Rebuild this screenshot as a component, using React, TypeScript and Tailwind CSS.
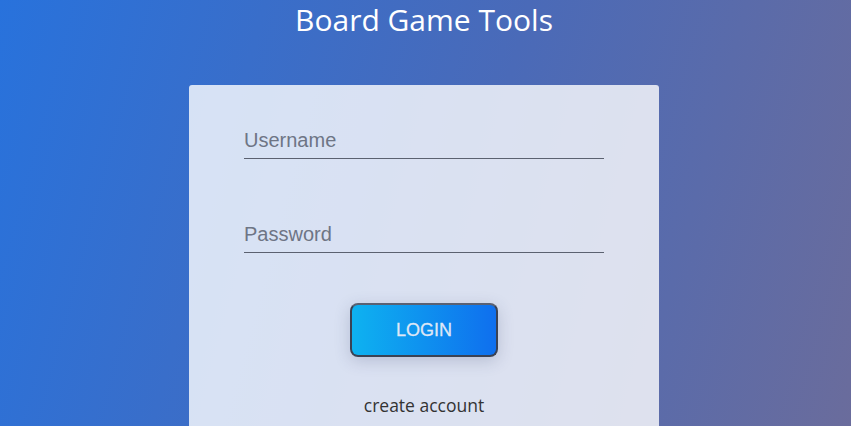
import React from "react";

export default function App() {
  return (
    <div className="w-[851px] h-[426px] overflow-hidden pr-[3px] bg-[linear-gradient(105deg,#2872dc_0%,#4a6ab8_55%,#6a6c9c_100%)] flex flex-col items-center">
      <h1 className="mt-[0px] text-[30px] leading-[40px] text-white font-['Open_Sans',sans-serif]">Board Game Tools</h1>
      <div className="mt-[45px] w-[470px] h-[400px] shrink-0 rounded-[3px] bg-[rgba(255,255,255,0.8)] flex flex-col items-center">
        <div className="mt-[42px] w-[360px] flex flex-col">
          <input
            placeholder="Username"
            className="h-[32px] pb-[4px] border-b border-[#5b6170] bg-transparent text-[20px] font-['Liberation_Sans',Arial,sans-serif] text-[#444] placeholder:text-[#6e7585] outline-none"
          />
          <input
            type="password"
            placeholder="Password"
            className="mt-[62px] h-[32px] pb-[4px] border-b border-[#5b6170] bg-transparent text-[20px] font-['Liberation_Sans',Arial,sans-serif] text-[#444] placeholder:text-[#6e7585] outline-none"
          />
        </div>
        <button className="mt-[50px] w-[148px] h-[54px] rounded-[8px] border-2 border-[#3a4254] border-t-[#5a6172] bg-[linear-gradient(90deg,#0eb2f0,#0f6fee)] text-[#dfe7f6] text-[18px] font-['Liberation_Sans',Arial,sans-serif] [-webkit-text-stroke:0.3px_#dfe7f6] shadow-[0_4px_16px_rgba(60,70,110,0.22)]">
          LOGIN
        </button>
        <div className="mt-[35px] text-[17.5px] text-[#333] font-['Open_Sans',sans-serif]">create account</div>
      </div>
    </div>
  );
}
